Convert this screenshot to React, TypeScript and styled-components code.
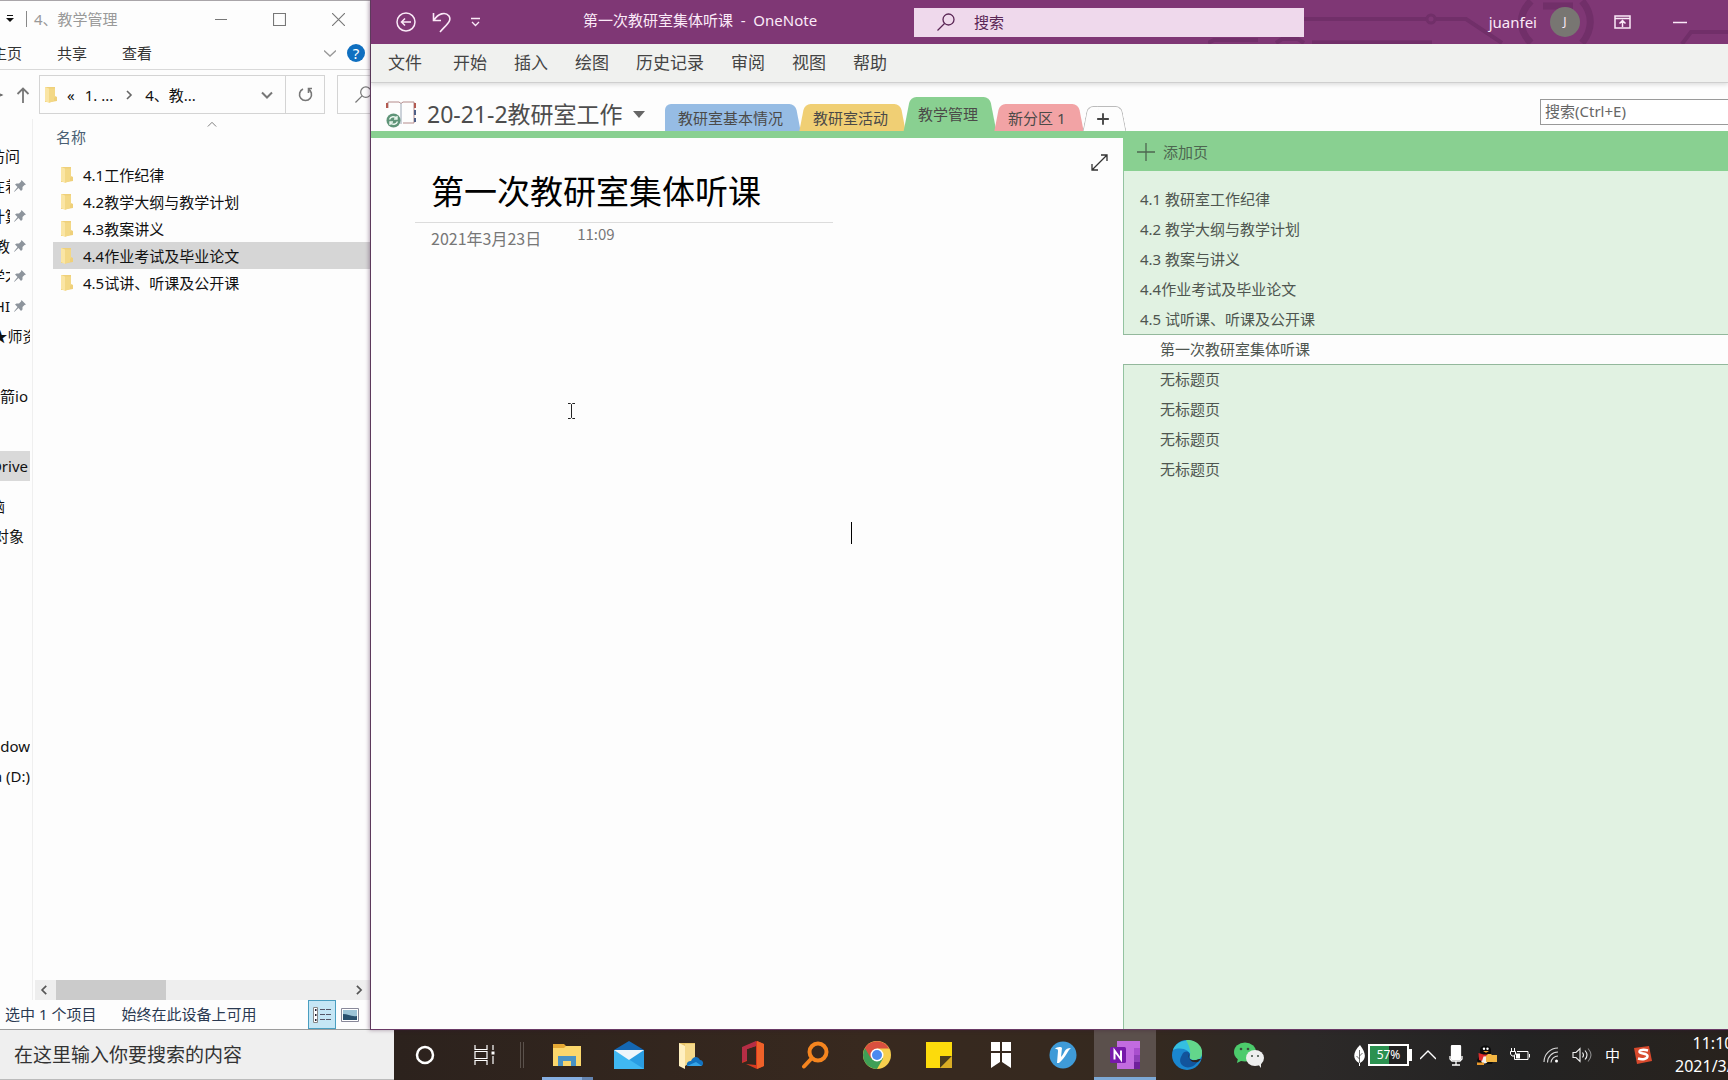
import React from 'react';
import styled, { createGlobalStyle, css } from 'styled-components';

const sans = '"Noto Sans", "Noto Sans CJK SC", sans-serif';

const GlobalStyle = createGlobalStyle`
  * { box-sizing: border-box; }
  body { margin: 0; font-family: ${sans}; font-size: 15px; line-height: 20px; overflow: hidden; }
  button, input { font: inherit; color: inherit; }
  button { background: none; border: 0; padding: 0; display: flex; align-items: center; white-space: nowrap; }
  ul { list-style: none; margin: 0; padding: 0; }
  h1 { margin: 0; font-weight: 400; }
  svg { display: block; flex: none; }
`;

const Desktop = styled.div`
  display: flex;
  flex-direction: column;
  height: 100vh;
  overflow: hidden;
  background: #fdfdfd;
`;
const Windows = styled.main`
  flex: 1;
  min-height: 0;
  display: grid;
  grid-template-columns: 370px minmax(0, 1fr);
`;

/* ---------- File explorer ---------- */
const Explorer = styled.section`
  display: flex;
  flex-direction: column;
  min-height: 0;
  overflow: hidden;
  border-top: 1px solid #a9a5a9;
  border-bottom: 1px solid #9c9c9c;
  color: #111;
`;
const ExplorerTitle = styled.header`
  display: flex;
  align-items: center;
  height: 36px;
  padding: 0 25px 0 6px;
  color: #999;
`;
const Rule = styled.span`
  width: 1px;
  height: 16px;
  margin: 0 7px 0 12px;
  background: #888;
`;
const CaptionButtons = styled.div`
  margin-left: auto;
  display: flex;
  gap: 46px;
`;
const ExplorerTabs = styled.nav`
  display: flex;
  align-items: center;
  height: 33px;
  gap: 35px;
  border-bottom: 1px solid #d9d9d9;
  color: #333;
`;
const ClippedTab = styled.button`
  width: 22px;
  overflow: hidden;
  justify-content: flex-end;
`;
const TabTools = styled.div`
  margin-left: auto;
  padding-right: 5px;
  display: flex;
  align-items: center;
  gap: 11px;
`;
const HelpBadge = styled.button`
  width: 18px;
  height: 18px;
  justify-content: center;
  border-radius: 50%;
  background: #0f6fc0;
  color: #fff;
`;
const AddressRow = styled.div`
  display: flex;
  align-items: center;
  height: 49px;
  flex: none;
`;
const Address = styled.div`
  display: flex;
  align-items: center;
  flex: none;
  width: 247px;
  height: 39px;
  margin-left: 9px;
  padding-left: 5px;
  border: 1px solid #d4d4d4;
`;
const Crumb = styled.button`
  margin-left: 10px;
`;
const AddressChevron = styled.button`
  margin-left: auto;
  padding-right: 12px;
`;
const Refresh = styled.button`
  flex: none;
  width: 40px;
  height: 39px;
  margin-left: -1px;
  justify-content: center;
  border: 1px solid #d4d4d4;
`;
const ExplorerSearch = styled.button`
  flex: 1;
  height: 39px;
  margin-left: 12px;
  padding-left: 17px;
  border: 1px solid #d4d4d4;
  border-right: 0;
`;
const ExplorerBody = styled.div`
  flex: 1;
  min-height: 0;
  display: grid;
  grid-template-columns: 33px minmax(0, 1fr);
`;
const NavPane = styled.nav`
  padding-top: 22px;
  border-right: 1px solid #efefef;
  overflow: hidden;
`;
const NavGroup = styled.div<{ $before?: number }>`
  margin-top: ${(p) => p.$before ?? 0}px;
`;
const NavItem = styled.button<{ $end?: number; $active?: boolean }>`
  width: 30px;
  height: 30px;
  padding-right: ${(p) => p.$end ?? 0}px;
  justify-content: flex-end;
  overflow: hidden;
  background: ${(p) => (p.$active ? '#d9d9d9' : 'transparent')};
`;
const NavClip = styled.span<{ $wide?: boolean; $center?: boolean }>`
  display: flex;
  flex: none;
  width: ${(p) => (p.$wide ? 30 : 10)}px;
  margin-right: ${(p) => (p.$wide ? 0 : 4)}px;
  justify-content: ${(p) => (p.$center ? 'center' : 'flex-end')};
  overflow: hidden;
`;
const ListPane = styled.div`
  display: flex;
  flex-direction: column;
  min-height: 0;
`;
const ColumnHead = styled.button`
  display: flex;
  flex-direction: column;
  height: 42px;
  margin: 0 0 0 20px;
  color: #4a5f73;
`;
const SortMark = styled.span`
  height: 10px;
  display: flex;
  align-items: center;
`;
const ColumnName = styled.span`
  align-self: flex-start;
  padding-left: 3px;
  line-height: 16px;
`;
const Files = styled.ul`
  flex: 1;
  padding-left: 20px;
`;
const FileRow = styled.button<{ $active?: boolean }>`
  width: 100%;
  height: 27px;
  padding-left: 8px;
  gap: 10px;
  color: #111;
  background: ${(p) => (p.$active ? '#d6d6d6' : 'transparent')};
`;
const ScrollTrack = styled.div`
  display: flex;
  align-items: center;
  height: 20px;
  margin-left: 2px;
  padding: 0 6px 0 5px;
  background: #eee;
`;
const ScrollThumb = styled.span`
  width: 110px;
  height: 20px;
  margin: 0 auto 0 6px;
  background: #cbcbcb;
`;
const StatusBar = styled.footer`
  display: flex;
  align-items: center;
  height: 29px;
  padding: 0 11px 0 5px;
  color: #2b3a52;
`;
const StatusText = styled.span`
  margin-right: 25px;
  padding-bottom: 2px;
`;
const ViewButtons = styled.div`
  margin-left: auto;
  display: flex;
  align-items: center;
  gap: 5px;
`;
const ViewButton = styled.button<{ $on?: boolean }>`
  height: 29px;
  padding: 0 ${(p) => (p.$on ? 4 : 0)}px;
  ${(p) => p.$on && css`background: #c5e6f5; border: 1px solid #4a9ec0;`}
`;

/* ---------- OneNote ---------- */
const OneNote = styled.section`
  display: flex;
  flex-direction: column;
  min-height: 0;
  border-left: 1px solid #5d3a5c;
  border-bottom: 1px solid #6a3a66;
  box-shadow: -1px 0 4px rgba(60, 20, 60, 0.4);
  background: #fdfdfd;
  z-index: 1;
`;
const TitleBar = styled.header`
  position: relative;
  display: flex;
  align-items: center;
  height: 44px;
  flex: none;
  background: #7f3775;
  color: #fbeaf8;
`;
const Circuit = styled.svg`
  position: absolute;
  right: 0;
  top: 0;
`;
const TitleLeft = styled.div`
  position: relative;
  display: flex;
  align-items: center;
  flex: 0 0 543px;
  padding-left: 25px;
  gap: 16px;
`;
const DocTitle = styled.span`
  margin: 0 auto;
  padding: 0 12px 4px 0;
  white-space: pre;
`;
const TopSearch = styled.label`
  position: relative;
  display: flex;
  align-items: center;
  flex: 0 1 390px;
  height: 29px;
  padding-left: 23px;
  gap: 19px;
  background: #efd9ec;
  color: #5a2655;
`;
const TopInput = styled.input`
  flex: 1;
  min-width: 0;
  padding: 0;
  border: 0;
  outline: 0;
  background: transparent;
  &::placeholder { color: #5a2655; opacity: 1; }
`;
const Account = styled.div`
  position: relative;
  display: flex;
  align-items: center;
  margin-left: auto;
  padding-right: 41px;
`;
const Avatar = styled.span`
  display: grid;
  place-items: center;
  width: 30px;
  height: 30px;
  margin: 0 34px 0 13px;
  border-radius: 50%;
  background: #787672;
  font-size: 12px;
`;
const Minimise = styled.button`
  margin-left: 42px;
`;
const Ribbon = styled.nav`
  display: flex;
  align-items: center;
  gap: 27px;
  height: 39px;
  flex: none;
  padding-left: 17px;
  background: #f0f1ef;
  border-bottom: 1px solid #cfcfcf;
  box-shadow: 0 2px 4px rgba(0, 0, 0, 0.12);
  font-size: 17px;
  color: #444;
  button:first-child { margin-right: 4px; }
`;
const NotebookRow = styled.div`
  display: flex;
  align-items: flex-end;
  height: 48px;
  flex: none;
  padding-left: 15px;
`;
const NotebookButton = styled.button`
  height: 34px;
  width: 279px;
  gap: 10px;
  font-size: 23px;
  color: #4d4d4d;
`;
const tabFace = css<{ $color: string; $outlined?: boolean }>`
  content: '';
  position: absolute;
  top: 0;
  bottom: 0;
  z-index: -1;
  background: ${(p) => p.$color};
  border: ${(p) => (p.$outlined ? '1px solid #bbb' : '0')};
  border-bottom: 0;
`;
const SectionTab = styled.button<{ $color: string; $tall?: boolean; $outlined?: boolean; $first?: boolean }>`
  position: relative;
  z-index: 0;
  height: ${(p) => (p.$tall ? 34 : p.$outlined ? 25 : 27)}px;
  padding: 0 17px 0 13px;
  color: #4b4a48;
  &::before {
    ${tabFace}
    left: ${(p) => (p.$first ? 0 : 2)}px;
    right: 40%;
    border-right: 0;
    border-radius: 6px 0 0 0;
    transform: ${(p) => (p.$first ? 'none' : 'skewX(-11deg)')};
  }
  &::after {
    ${tabFace}
    left: 40%;
    right: 2px;
    border-left: 0;
    border-radius: 0 6px 0 0;
    transform: skewX(11deg);
  }
`;
const PageSearch = styled.input`
  width: 188px;
  height: 26px;
  margin: 0 0 6px auto;
  padding: 0 4px 2px;
  border: 1px solid #999;
  border-right: 0;
  background: #fff;
  &::placeholder { color: #666; opacity: 1; }
`;
const ColorStrip = styled.div`
  height: 7px;
  flex: none;
  background: #89d091;
`;
const Work = styled.div`
  flex: 1;
  min-height: 0;
  display: grid;
  grid-template-columns: minmax(0, 1fr) 605px;
`;
const Canvas = styled.article`
  position: relative;
  padding: 34px 16px 0 44px;
`;
const Expand = styled.button`
  position: absolute;
  top: 16px;
  right: 15px;
`;
const PageTitle = styled.h1`
  width: 418px;
  height: 51px;
  padding-left: 16px;
  border-bottom: 1px solid #dcdcdc;
  font-size: 33px;
  line-height: 40px;
  color: #000;
`;
const Stamp = styled.div`
  display: flex;
  gap: 36px;
  padding: 1px 0 0 16px;
  font-family: "Noto Sans CJK SC", sans-serif;
  color: #777;
`;
const StampDate = styled.time`
  padding-top: 4px;
  font-size: 16px;
`;
const Caret = styled.span`
  position: absolute;
  left: 480px;
  top: 384px;
  width: 1px;
  height: 22px;
  background: #000;
`;
const Pointer = styled.svg`
  position: absolute;
  left: 196px;
  top: 265px;
`;
const Pages = styled.aside`
  display: flex;
  flex-direction: column;
  min-height: 0;
`;
const AddPage = styled.button`
  height: 33px;
  flex: none;
  padding: 0 0 5px 14px;
  gap: 8px;
  background: #89d091;
  color: #4d6650;
`;
const PageList = styled.ul`
  flex: 1;
  padding-top: 13px;
  background: #e1f2e2;
  border-left: 1px solid #93c3a0;
`;
const PageRow = styled.button<{ $sub?: boolean; $active?: boolean }>`
  width: 100%;
  height: 30px;
  padding-left: ${(p) => (p.$sub ? 36 : 16)}px;
  color: #4f5650;
  ${(p) => p.$active && css`
    width: calc(100% + 1px);
    height: 31px;
    margin: 0 0 -1px -1px;
    padding: 0 0 1px 37px;
    background: #fdfdfd;
    border: solid #93b89c;
    border-width: 1px 0;
  `}
`;

/* ---------- Taskbar ---------- */
const Taskbar = styled.footer`
  display: flex;
  height: 50px;
  flex: none;
  background: linear-gradient(90deg, #2c221d 23%, #38291f 50%, #35291f 66%, #2c2928 76%, #232323 88%, #28221d 100%);
  color: #fff;
  white-space: nowrap;
`;
const TaskSearch = styled.input`
  flex: 0 0 394px;
  padding: 0 14px;
  border: 0;
  border-bottom: 1px solid #bbb;
  border-radius: 0;
  background: #efefef;
  font-size: 19px;
  &::placeholder { color: #333; opacity: 1; }
`;
const TaskButton = styled.button<{ $active?: boolean }>`
  flex: none;
  width: 62px;
  justify-content: center;
  background: ${(p) => (p.$active ? '#5b504c' : 'transparent')};
  box-shadow: ${(p) => (p.$active ? 'inset 0 -3px #7da9d6' : 'none')};
`;
const RunningButton = styled(TaskButton)`
  background: linear-gradient(90deg, #86aee0 0 40px, #6484b0 40px) 6px 47px / 51px 3px no-repeat;
`;
const TaskDivider = styled.span`
  width: 4px;
  height: 26px;
  margin: 12px 12px 0 2px;
  border: solid #5b524c;
  border-width: 0 1px;
`;
const Tray = styled.div`
  display: flex;
  align-items: center;
  margin-left: auto;
  flex: 0 0 374px;
  min-width: 0;
`;
const Battery = styled.span`
  display: flex;
  align-items: center;
  justify-content: center;
  flex: none;
  width: 41px;
  height: 22px;
  margin-left: 3px;
  border: 2px solid #fff;
  background: linear-gradient(90deg, #2b9150 52%, #222 52%);
  font-size: 12px;
`;
const BatteryTip = styled.span`
  flex: none;
  width: 3px;
  height: 12px;
  margin-right: 8px;
  background: #fff;
`;
const TrayIcons = styled.div`
  display: flex;
  flex: none;
  align-items: center;
  gap: 13px;
`;
const Clock = styled.time`
  width: 78px;
  margin-left: 21px;
  flex: none;
  text-align: center;
  font-size: 16px;
  line-height: 23px;
`;

/* ---------- Drawings ---------- */
const Chevron = ({ d, w = 12, color = '#666', s = 1.3 }: { d: string; w?: number; color?: string; s?: number }) => (
  <svg width={w} height={w} viewBox="0 0 12 12" fill="none" stroke={color} strokeWidth={s}><path d={d} /></svg>
);
const Folder = () => (
  <svg width="12" height="17" viewBox="0 0 12 17">
    <path d="M0 1h10v9l2 1v4l-6 1H0z" fill="#efd07a" />
    <path d="M0 1l4 1.500V17l-4-2z" fill="#fae5a4" />
    <path d="M4 2.500h6v9H9v3.500l-5 2z" fill="#f3d886" />
  </svg>
);
const Pin = () => (
  <svg width="12" height="12" viewBox="0 0 12 12" fill="#8d949c">
    <path d="M7.500 0L12 4.500l-1.500.5-2 2v2.500L7 11 4.500 8 .5 11.700 0 11.500l3.500-4.500L1 4.500 2.500 3.500H5l2-2z" />
  </svg>
);
const Magnifier = ({ size = 17, color = '#777' }: { size?: number; color?: string }) => (
  <svg width={size} height={size} viewBox="0 0 18 18" fill="none" stroke={color} strokeWidth="1.300">
    <circle cx="11.500" cy="6.500" r="5.500" /><path d="M7.500 10.500L.5 17.500" />
  </svg>
);
const NotebookIcon = () => (
  <svg width="31" height="28" viewBox="0 0 31 28" fill="none">
    <path d="M2 8V2h11l2 1.500L17 2h11v21H17" stroke="#b58c8c" />
    <path d="M15 3.500V24" stroke="#9aa6b5" />
    <path d="M1 3v5M29 3v5" stroke="#b35a50" strokeWidth="2" />
    <path d="M29 10v5M29 18v4" stroke="#4e5f86" strokeWidth="2" />
    <circle cx="7.500" cy="20.500" r="7" fill="#5f9478" />
    <path d="M3.500 19.500c1-3 5-4 7.500-1m0-2.500v3H8M11.500 21.500c-1 3-5 4-7.500 1m0 2.500v-3h3" stroke="#e8f5ec" strokeWidth="1.400" />
  </svg>
);
const CortanaIcon = () => (
  <svg width="20" height="20" viewBox="0 0 20 20" fill="none" stroke="#fff" strokeWidth="2.500"><circle cx="10" cy="10" r="8" /></svg>
);
const TaskViewIcon = () => (
  <svg width="26" height="20" viewBox="0 0 26 20" fill="none" stroke="#fff" strokeWidth="1.200">
    <path d="M1 0v4.500h12V0M1 20v-4.500h12V20M1 6.500h12v7H1zM19 0v5M19 11v8" /><path d="M17.500 6.500h3v3h-3z" fill="#fff" stroke="none" />
  </svg>
);
const ExplorerIcon = () => (
  <svg width="28" height="24" viewBox="0 0 28 24">
    <path d="M0 1h11l2 2h15v20H0z" fill="#e5a935" /><path d="M0 5h11l2-2h15v20H0z" fill="#fbd76c" />
    <path d="M5 13h18v10h-5v-5h-8v5H5z" fill="#4a93c4" />
  </svg>
);
const MailIcon = () => (
  <svg width="30" height="28" viewBox="0 0 30 28">
    <path d="M0 9L15 0l15 9v3H0z" fill="#1467b3" /><path d="M0 9h30v19H0z" fill="#2a9de2" />
    <path d="M0 9v19h30z" fill="#40b8f2" /><path d="M0 9h30L15 19z" fill="#eff6fb" />
  </svg>
);
const CloudFolderIcon = () => (
  <svg width="26" height="28" viewBox="0 0 26 28">
    <path d="M1 2h16v22H7z" fill="#e8c468" /><path d="M1 2l6 3v23l-6-3z" fill="#fff0c0" /><path d="M7 3h10v16l-10 6z" fill="#f5d98b" />
    <path d="M9 25c-1-4 2-5 4-5 2-5 7-5 9-1 4 0 4 6 1 6z" fill="#1272c0" /><path d="M9 25l9-4 6 4z" fill="#35a4e6" />
  </svg>
);
const OfficeIcon = () => (
  <svg width="24" height="28" viewBox="0 0 24 28">
    <path d="M16 0l7 3v22l-7 3-11-5 10 1V5L6 8v12l-5 2V7z" fill="#d83b20" /><path d="M16 0l7 3v22l-7 3z" fill="#ef6129" />
    <path d="M15 0L1 6v15l5-2V8l9-3z" fill="#b62d45" />
  </svg>
);
const OrangeSearchIcon = () => (
  <svg width="28" height="28" viewBox="0 0 28 28" fill="none" stroke="#f5851f" strokeWidth="4" strokeLinecap="round">
    <circle cx="17" cy="11" r="8.500" /><path d="M10.500 17.500L3 25.500" />
  </svg>
);
const ChromeIcon = () => (
  <svg width="28" height="28" viewBox="0 0 28 28">
    <circle cx="14" cy="14" r="14" fill="#f7cf4d" />
    <path d="M14 14L1.900 7A14 14 0 0 0 14 28l6-10.500z" fill="#3f9f56" />
    <path d="M14 14l-6 3.500L1.900 7A14 14 0 0 1 26.200 7.500H14z" fill="#d9503f" />
    <circle cx="14" cy="14" r="6.500" fill="#fff" /><circle cx="14" cy="14" r="5" fill="#4a8af0" />
  </svg>
);
const StickyIcon = () => (
  <svg width="26" height="26" viewBox="0 0 26 26">
    <path d="M0 0h26v14l-12 12H0z" fill="#fcdb0c" /><path d="M14 14h12L14 26z" fill="#4a3c1c" /><path d="M26 14v12H14z" fill="#d9ad25" />
  </svg>
);
const BookmarkIcon = () => (
  <svg width="20" height="26" viewBox="0 0 20 26" fill="#fff">
    <path d="M0 0h9v9H0zM11 0h9v9h-9zM0 11h9v9l-9 6zM11 11h9v15l-9-6z" />
  </svg>
);
const VIcon = () => (
  <svg width="28" height="28" viewBox="0 0 28 28">
    <circle cx="14" cy="14" r="13.500" fill="#3f9bd8" />
    <path d="M6 8c1-2 6-3 7-1l-1 9c4-4 3-9 10-9-3 2-5 9-12 15H8L9 10c0-2-1-2-3-2z" fill="#fff" />
  </svg>
);
const OneNoteIcon = () => (
  <svg width="30" height="28" viewBox="0 0 30 28">
    <path d="M7 0h23v28H7z" fill="#c26be0" /><path d="M24 7h6v7h-6z" fill="#a94fce" /><path d="M24 14h6v7h-6z" fill="#8f3fb8" /><path d="M24 21h6v7h-6z" fill="#6f1f9c" />
    <rect y="6" width="16" height="16" rx="1.500" fill="#7719aa" /><path d="M4.500 18.500v-9l6.500 9v-9" fill="none" stroke="#fff" strokeWidth="2" />
  </svg>
);
const EdgeIcon = () => (
  <svg width="30" height="30" viewBox="0 0 30 30">
    <circle cx="15" cy="15" r="15" fill="#1a86cf" />
    <path d="M1 10C5-2 25-4 30 12c1 7-5 9-10 8-3-1-3-2-2-4 1-5-8-10-17-6z" fill="#35bfe0" />
    <path d="M14 0c9-1 17 6 16 13 0 7-7 8-11 6-2-1-1-2-1-4 1-6-2-11-4-15z" fill="#63d68b" />
    <path d="M10 15c2-5 8-4 8 0-2 5 4 7 9 4-3 8-12 11-17 6-3-3-2-7 0-10z" fill="#12549c" />
    <path d="M17 14c-2 5 3 8 10 5l2 0-3 3c-6 1-10-2-9-8z" fill="#2f251e" />
  </svg>
);
const WeChatIcon = () => (
  <svg width="30" height="26" viewBox="0 0 30 26">
    <ellipse cx="11" cy="10" rx="11" ry="9.500" fill="#4ccb6c" /><path d="M4 16l-1 5 6-3z" fill="#4ccb6c" />
    <ellipse cx="21" cy="16" rx="9" ry="8" fill="#eee" /><path d="M24 22l3 4v-6z" fill="#eee" />
    <g fill="#3b4a3e"><circle cx="7" cy="7" r="1.300" /><circle cx="14" cy="7" r="1.300" /><circle cx="18" cy="14" r="1" /><circle cx="24" cy="14" r="1" /></g>
  </svg>
);
const LeafIcon = () => (
  <svg width="11" height="21" viewBox="0 0 11 21"><path d="M6 0c6 8 7 14 0 18v3H5v-3C-2 14-1 7 6 0z" fill="#fff" /><path d="M5.500 5v13M5.500 11l3-3M5.500 14l-3-3" stroke="#444" strokeWidth=".8" /></svg>
);
const MicIcon = () => (
  <svg width="14" height="21" viewBox="0 0 14 21" fill="none" stroke="#fff" strokeWidth="1.300">
    <rect x="2.500" y=".5" width="9" height="14" rx="1" fill="#fff" /><path d="M1 11v3l2 2h8l2-2v-3M7 16v4M3 20h8" />
  </svg>
);
const PenguinIcon = () => (
  <svg width="21" height="20" viewBox="0 0 21 20">
    <path d="M4 5c0-6 11-6 11 0v5l3 4-2 5H3l-2-4 3-5z" fill="#0c0c0c" />
    <ellipse cx="8.500" cy="14.500" rx="3.500" ry="4" fill="#f4f0ea" />
    <path d="M2.500 8l5 1.500h7V11l-7 .5L6 16l-3-1z" fill="#dc2b2b" />
    <path d="M7 6h6l-3 1.800z" fill="#f2a22b" />
    <circle cx="8" cy="3.800" r="1.200" fill="#fff" /><circle cx="11.500" cy="3.800" r="1.200" fill="#fff" />
    <path d="M10 11l2-2h3l1 1h5v7H10z" fill="#f3b643" /><path d="M1 17.500h7V20H1z" fill="#ea9a2c" />
  </svg>
);
const PlugBatteryIcon = () => (
  <svg width="20" height="14" viewBox="0 0 20 14" fill="none" stroke="#fff"><path d="M7 3.500h11v8H4.500V8M19.500 6v3.500M1.500 0v3M4.500 0v3M.5 3.500h5V6l-1.500 2H2L.5 6z" /><path d="M6 5.500h4v5H6z" fill="#fff" stroke="none" /></svg>
);
const WifiIcon = () => (
  <svg width="16" height="16" viewBox="0 0 16 16" fill="none" stroke="#ddd" strokeWidth="1.100"><path d="M1 15A14 14 0 0 1 15 1M4.500 15.500A10.500 10.500 0 0 1 15 5M8 15.500A7 7 0 0 1 15 9" /><circle cx="13.500" cy="14" r="1.500" fill="#fff" stroke="none" /></svg>
);
const VolumeIcon = () => (
  <svg width="20" height="16" viewBox="0 0 20 16" fill="none" stroke="#eee" strokeWidth="1.100"><path d="M1 5.500h3l4-4v13l-4-4H1zM10.500 5.500q2 2.500 0 5M13 3.500q4 4.500 0 9" /><path d="M16 1.500q6 6.500 0 13" stroke="#888" /></svg>
);
const SogouIcon = () => (
  <svg width="20" height="20" viewBox="0 0 20 20"><path d="M1 3l15-2 3 15-15 3z" fill="#d8492c" /><path d="M15 5.500c-4-1-9-1-8.500 1.500.5 2 8 1 8 4s-5 4-9.500 2.500" fill="none" stroke="#fff" strokeWidth="2.500" /></svg>
);

const files = ['4.1工作纪律', '4.2教学大纲与教学计划', '4.3教案讲义', '4.4作业考试及毕业论文', '4.5试讲、听课及公开课'];
const pinned = [
  { text: '在着', center: true },
  { text: '计算', center: true },
  { text: '教' },
  { text: '学才', center: true },
  { text: 'HI' },
];
const menus = ['文件', '开始', '插入', '绘图', '历史记录', '审阅', '视图', '帮助'];
const pages = [
  { text: '4.1 教研室工作纪律' },
  { text: '4.2 教学大纲与教学计划' },
  { text: '4.3 教案与讲义' },
  { text: '4.4作业考试及毕业论文' },
  { text: '4.5 试听课、听课及公开课' },
  { text: '第一次教研室集体听课', sub: true, active: true },
  { text: '无标题页', sub: true },
  { text: '无标题页', sub: true },
  { text: '无标题页', sub: true },
  { text: '无标题页', sub: true },
];
const apps = [
  ['邮件', MailIcon], ['云文件夹', CloudFolderIcon], ['Office', OfficeIcon], ['查找', OrangeSearchIcon], ['Chrome', ChromeIcon],
  ['便笺', StickyIcon], ['书签', BookmarkIcon], ['V', VIcon], ['OneNote', OneNoteIcon], ['Edge', EdgeIcon], ['微信', WeChatIcon],
] as const;

function ExplorerWindow() {
  return (
    <Explorer>
      <ExplorerTitle>
        <svg width="8" height="8" viewBox="0 0 8 8" fill="#111"><path d="M1 0h6v1H1zM0 3h8L4 7z" /></svg>
        <Rule />
        <span>4、教学管理</span>
        <CaptionButtons>
          <button aria-label="最小化"><Chevron d="M0 6.500h12" color="#777" s={1} /></button>
          <button aria-label="最大化"><Chevron d="M.5.5h11v11H.5z" w={13} color="#777" s={1} /></button>
          <button aria-label="关闭"><Chevron d="M0 0l12 12M12 0L0 12" w={13} color="#777" s={1} /></button>
        </CaptionButtons>
      </ExplorerTitle>
      <ExplorerTabs>
        <ClippedTab>主页</ClippedTab>
        <button>共享</button>
        <button>查看</button>
        <TabTools>
          <button aria-label="展开功能区"><Chevron d="M0 3.500l6 5.500 6-5.500" color="#999" /></button>
          <HelpBadge>?</HelpBadge>
        </TabTools>
      </ExplorerTabs>
      <AddressRow>
        <Chevron d="M0 5l2 1-2 1" />
        <button aria-label="向上">
          <svg width="18" height="16" viewBox="0 0 18 16" fill="none" stroke="#777" strokeWidth="1.800"><path d="M11 16V1.500M5.500 7L11 1.500 16.500 7" /></svg>
        </button>
        <Address>
          <Folder />
          <Crumb>«</Crumb>
          <Crumb>1. ...</Crumb>
          <Crumb aria-label="下级"><Chevron d="M4 2l4 4-4 4" s={1.6} /></Crumb>
          <Crumb>4、教...</Crumb>
          <AddressChevron aria-label="历史"><Chevron d="M1 3.500l5 5 5-5" s={2} color="#777" /></AddressChevron>
        </Address>
        <Refresh aria-label="刷新">
          <svg width="15" height="15" viewBox="0 0 15 15" fill="none" stroke="#777" strokeWidth="1.600"><path d="M10 2a6 6 0 1 1-5 0M10.500 6V1.500H14" /></svg>
        </Refresh>
        <ExplorerSearch aria-label="搜索"><Magnifier /></ExplorerSearch>
      </AddressRow>
      <ExplorerBody>
        <NavPane>
          <NavItem $end={10}>快速访问</NavItem>
          {pinned.map((p) => (
            <NavItem key={p.text} $end={4}><NavClip $center={p.center}>{p.text}</NavClip><Pin /></NavItem>
          ))}
          <NavItem><NavClip $wide $center>★师资</NavClip></NavItem>
          <NavGroup $before={30}><NavItem $end={2}>箭io</NavItem></NavGroup>
          <NavGroup $before={40}><NavItem $end={2} $active>OneDrive</NavItem></NavGroup>
          <NavGroup $before={10}>
            <NavItem $end={25}>此电脑</NavItem>
            <NavItem $end={6}>3D 对象</NavItem>
          </NavGroup>
          <NavGroup $before={180}>
            <NavItem>Window</NavItem>
            <NavItem>Data (D:)</NavItem>
          </NavGroup>
        </NavPane>
        <ListPane>
          <ColumnHead>
            <SortMark><Chevron d="M1 9l5-5 5 5" w={10} s={1} /></SortMark>
            <ColumnName>名称</ColumnName>
          </ColumnHead>
          <Files>
            {files.map((f, i) => (
              <li key={f}><FileRow $active={i === 3}><Folder />{f}</FileRow></li>
            ))}
          </Files>
          <ScrollTrack>
            <Chevron d="M7.500 1L2.500 6l5 5" s={2} w={10} color="#555" />
            <ScrollThumb />
            <Chevron d="M3.500 1l5 5-5 5" s={2} w={10} color="#555" />
          </ScrollTrack>
        </ListPane>
      </ExplorerBody>
      <StatusBar>
        <StatusText>选中 1 个项目</StatusText>
        <StatusText>始终在此设备上可用</StatusText>
        <ViewButtons>
          <ViewButton $on aria-label="详细信息">
            <svg width="18" height="16" viewBox="0 0 18 16" fill="none" stroke="#556"><path d="M.5.5h4v15h-4z" fill="#fff" stroke="#888" /><path d="M2 3h1.500M2 8h1.500M2 13h1.500" stroke="#223" strokeWidth="2" /><path d="M7 2.500h11M7 7.500h11M7 12.500h11" strokeDasharray="5 1" /></svg>
          </ViewButton>
          <ViewButton aria-label="大图标">
            <svg width="18" height="14" viewBox="0 0 18 14"><path d="M.5.5h17v13H.5z" fill="#fff" stroke="#889" /><path d="M2 2h14v10H2z" fill="#9cc4d8" /><path d="M2 6c5 0 8 3 14 2v4H2z" fill="#28506e" /></svg>
          </ViewButton>
        </ViewButtons>
      </StatusBar>
    </Explorer>
  );
}

function OneNoteWindow() {
  return (
    <OneNote>
      <TitleBar>
        <Circuit width="520" height="44" viewBox="0 0 520 44" fill="none" stroke="#712f69" strokeWidth="4">
          <path d="M96 19h122M228 19h30l36 24M104 42.500h120M0 43l6-3h44M68 43l6-4h16l6 4" /><circle cx="223" cy="19" r="4" strokeWidth="3" />
          <path d="M323 1c-14 14-12 30 0 42M374 1c12 14 10 30 0 42M335 6h30" strokeWidth="7" /><path d="M474 44l9-12h37" />
        </Circuit>
        <TitleLeft>
          <button aria-label="返回">
            <svg width="20" height="20" viewBox="0 0 20 20" fill="none" stroke="currentColor" strokeWidth="1.500"><circle cx="10" cy="10" r="9" /><path d="M15 10H5.500M9 6.500L5.500 10 9 13.500" /></svg>
          </button>
          <button aria-label="撤消">
            <svg width="20" height="21" viewBox="0 0 20 21" fill="none" stroke="currentColor" strokeWidth="1.600"><path d="M1.500 1v7.500H9M2 8C6 2 13-1 17 4c3 5-2 8-9 16" /></svg>
          </button>
          <button aria-label="自定义">
            <svg width="14" height="10" viewBox="0 0 14 10" fill="none" stroke="currentColor" strokeWidth="1.300"><path d="M3 1.500h9M4 5l3.500 3.500L11 5" /></svg>
          </button>
          <DocTitle>{'第一次教研室集体听课  -  OneNote'}</DocTitle>
        </TitleLeft>
        <TopSearch>
          <Magnifier size={18} color="#5a2655" />
          <TopInput aria-label="搜索" placeholder="搜索" />
        </TopSearch>
        <Account>
          <span>juanfei</span>
          <Avatar>J</Avatar>
          <button aria-label="功能区显示选项">
            <svg width="17" height="14" viewBox="0 0 17 14" fill="none" stroke="currentColor" strokeWidth="1.500"><path d="M1 1h15v12H1zM1 3.500h15M8.500 12V6M5.500 8.500l3-3 3 3" /></svg>
          </button>
          <Minimise aria-label="最小化">
            <svg width="14" height="4" viewBox="0 0 14 4" stroke="currentColor" strokeWidth="1.500"><path d="M0 2.500h14" /></svg>
          </Minimise>
        </Account>
      </TitleBar>
      <Ribbon>{menus.map((m) => <button key={m}>{m}</button>)}</Ribbon>
      <NotebookRow>
        <NotebookButton>
          <NotebookIcon />
          20-21-2教研室工作
          <svg width="12" height="7" viewBox="0 0 12 7" fill="#666"><path d="M0 0h12L6 7z" /></svg>
        </NotebookButton>
        <SectionTab $first $color="#96bce4">教研室基本情况</SectionTab>
        <SectionTab $color="#f0cf74">教研室活动</SectionTab>
        <SectionTab $tall $color="#89d091">教学管理</SectionTab>
        <SectionTab $color="#f2a3a5">新分区 1</SectionTab>
        <SectionTab $outlined $color="#fdfdfd" aria-label="新建分区">
          <Chevron d="M6 1v10M1 6h10" w={14} color="#444" s={1.6} />
        </SectionTab>
        <PageSearch aria-label="搜索页面" placeholder="搜索(Ctrl+E)" />
      </NotebookRow>
      <ColorStrip />
      <Work>
        <Canvas>
          <Expand aria-label="全页视图">
            <svg width="17" height="17" viewBox="0 0 17 17" fill="none" stroke="#333" strokeWidth="1.300"><path d="M1 16L16 1M10 1h6v6M1 10v6h6" /></svg>
          </Expand>
          <PageTitle>第一次教研室集体听课</PageTitle>
          <Stamp>
            <StampDate>2021年3月23日</StampDate>
            <time>11:09</time>
          </Stamp>
          <Pointer width="9" height="16" viewBox="0 0 9 16" fill="none" stroke="#222"><path d="M1 .5h2.500l1 1 1-1H8M4.500 1.500v13M1 15.500h2.500l1-1 1 1H8" /></Pointer>
          <Caret />
        </Canvas>
        <Pages>
          <AddPage>
            <svg width="18" height="18" viewBox="0 0 18 18" stroke="#4d6650" strokeWidth="1.300"><path d="M9 0v18M0 9h18" /></svg>
            添加页
          </AddPage>
          <PageList>
            {pages.map((p, i) => (
              <li key={i}><PageRow $sub={p.sub} $active={p.active}>{p.text}</PageRow></li>
            ))}
          </PageList>
        </Pages>
      </Work>
    </OneNote>
  );
}

export default function App() {
  return (
    <Desktop>
      <GlobalStyle />
      <Windows>
        <ExplorerWindow />
        <OneNoteWindow />
      </Windows>
      <Taskbar>
        <TaskSearch aria-label="搜索" placeholder="在这里输入你要搜索的内容" />
        <TaskButton aria-label="Cortana"><CortanaIcon /></TaskButton>
        <TaskButton aria-label="任务视图"><TaskViewIcon /></TaskButton>
        <TaskDivider />
        <RunningButton aria-label="文件资源管理器"><ExplorerIcon /></RunningButton>
        {apps.map(([name, Icon]) => (
          <TaskButton key={name} aria-label={name} $active={name === 'OneNote'}><Icon /></TaskButton>
        ))}
        <Tray>
          <LeafIcon />
          <Battery>57%</Battery>
          <BatteryTip />
          <TrayIcons>
            <Chevron d="M0 9l6-6 6 6" w={16} color="#fff" s={1} />
            <MicIcon />
            <PenguinIcon />
            <PlugBatteryIcon />
            <WifiIcon />
            <VolumeIcon />
            <span>中</span>
            <SogouIcon />
          </TrayIcons>
          <Clock>11:10<br />2021/3/23</Clock>
        </Tray>
      </Taskbar>
    </Desktop>
  );
}
